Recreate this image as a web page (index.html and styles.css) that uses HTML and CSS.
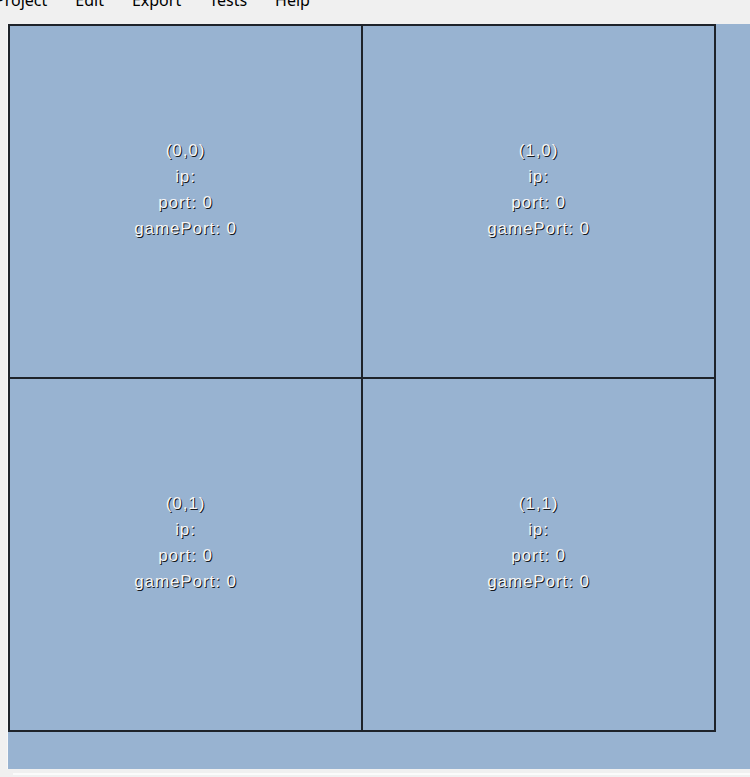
FILE: index.html
```html
<!DOCTYPE html>
<html>
<head>
<meta charset="utf-8">
<link rel="stylesheet" href="styles.css">
</head>
<body>
<div class="menubar">
  <span class="menu-item">Project</span>
  <span class="menu-item">Edit</span>
  <span class="menu-item">Export</span>
  <span class="menu-item">Tests</span>
  <span class="menu-item">Help</span>
</div>
<div class="canvas">
  <div class="grid">
    <div class="cell">
      <div class="line">(0,0)</div>
      <div class="line">ip:</div>
      <div class="line">port: 0</div>
      <div class="line">gamePort: 0</div>
    </div>
    <div class="cell">
      <div class="line">(1,0)</div>
      <div class="line">ip:</div>
      <div class="line">port: 0</div>
      <div class="line">gamePort: 0</div>
    </div>
    <div class="cell">
      <div class="line">(0,1)</div>
      <div class="line">ip:</div>
      <div class="line">port: 0</div>
      <div class="line">gamePort: 0</div>
    </div>
    <div class="cell">
      <div class="line">(1,1)</div>
      <div class="line">ip:</div>
      <div class="line">port: 0</div>
      <div class="line">gamePort: 0</div>
    </div>
  </div>
</div>
<div class="statusline"></div>
</body>
</html>
```

FILE: styles.css
```css
html, body {
  margin: 0;
  padding: 0;
  background: #f0f0f0;
  overflow: hidden;
  width: 750px;
  height: 777px;
}

.menubar {
  height: 24px;
  overflow: hidden;
  display: flex;
  gap: 28px;
}

.menu-item {
  font-family: "Noto Sans", "Open Sans", sans-serif;
  font-size: 16px;
  line-height: 20px;
  color: #000;
  margin-top: -10px;
  display: block;
}

.menu-item:first-child {
  margin-left: -5px;
}

.canvas {
  margin-left: 8px;
  height: 745px;
  background: #98b3d1;
  box-shadow: -1px 0 0 #f8f8f8;
}

.grid {
  display: grid;
  grid-template-columns: 353px 353px;
  grid-template-rows: 353px 353px;
  width: fit-content;
  border-left: 2px solid #1e232a;
  border-top: 2px solid #1e232a;
}

.cell {
  border-right: 2px solid #1e232a;
  border-bottom: 2px solid #1e232a;
  padding-top: 112px;
  text-align: center;
}

.line {
  font-family: "Liberation Sans", Arial, sans-serif;
  font-size: 17px;
  letter-spacing: 0.9px;
  line-height: 26px;
  color: #f6f6f6;
  text-shadow: 1px 1px 0 #15181c;
}

.statusline {
  margin-top: 4px;
  margin-left: 13px;
  height: 2px;
  background: #fbfbfb;
}
```
